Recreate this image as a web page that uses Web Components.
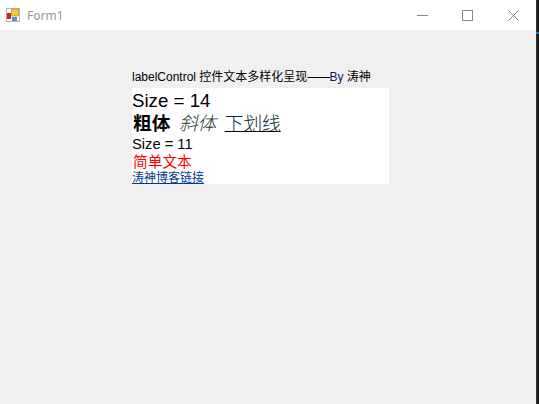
<!DOCTYPE html>
<html>
<head>
<meta charset="utf-8">
<title>Form1</title>
<style>
html, body { margin: 0; height: 100%; background: #f0f0f0; overflow: hidden; }
</style>
</head>
<body>
<win-form caption="Form1">
    <rich-label>
        <span slot="title">labelControl 控件文本多样化呈现<span style="letter-spacing:-1.5px">——</span><span style="color:#10106a;margin-left:1px">By</span> 涛神</span>
        <div style="font-size:18.7px;line-height:23px">Size = 14</div>
        <div style="font-size:18.7px;line-height:24px;white-space:nowrap;display:flex;padding-left:1px;gap:8.5px">
            <b>粗体</b>
            <i style="font-weight:300;color:#1f3a2e">斜体</i>
            <u style="font-weight:300;color:#0c2c3c;text-decoration-color:#000">下划线</u>
        </div>
        <div style="font-size:14.7px;line-height:17px">Size = 11</div>
        <div style="font-size:14.7px;line-height:18px;color:#f00;padding-left:1px">简单文本</div>
        <div style="font-size:12px;line-height:14px"><a href="#" style="color:#003a8c">涛神博客链接</a></div>
    </rich-label>
</win-form>
<script>
class WinForm extends HTMLElement {
    constructor() {
        super();
        this.shadowDOM = this.attachShadow({mode:'open'});
    }

    connectedCallback() {
        this.shadowDOM.innerHTML = `
            <style>
                :host { display: flex; height: 100vh; background: #f0f0f0; font-family: "Liberation Sans", "Noto Sans CJK SC", sans-serif; }
                .form { flex: 1; display: flex; flex-direction: column; }
                header { display: flex; align-items: center; height: 30px; background: #fff; flex: none; }
                .icon { margin-left: 6px; width: 14px; height: 14px; flex: none; }
                .caption { margin-left: 7px; font: 12px "Noto Sans", sans-serif; color: #999; flex: 1; }
                .btn { height: 30px; display: flex; align-items: center; justify-content: center; flex: none; }
                main { flex: 1; padding: 38px 0 0 132px; }
                .edge { width: 3px; flex: none; background: #1a1a1a; border-left: 1px solid #333; box-sizing: border-box; position: relative; }
                .edge i { position: absolute; left: -1px; right: 0; top: 32px; height: 2px; background: #1a7fc8; }
            </style>
            <div class="form">
                <header>
                    <svg class="icon" viewBox="0 0 14 14">
                        <rect x=".5" y=".5" width="13" height="13" fill="#fff" stroke="#b5b5b5"/>
                        <rect x="5.5" y="1" width="7" height="7" fill="#f4c93a" stroke="#b98a10" stroke-width=".7"/>
                        <rect x="1" y="5" width="4" height="6" fill="#c22a20"/>
                        <rect x="6" y="9" width="5" height="4" fill="#5a8fe0"/>
                    </svg>
                    <span class="caption">${this.getAttribute('caption')}</span>
                    <div class="btn" style="width:44px"><svg width="11" height="11" viewBox="0 0 11 11"><path d="M0 5.5h11" stroke="#888" fill="none"/></svg></div>
                    <div class="btn" style="width:47px"><svg width="11" height="11" viewBox="0 0 11 11"><rect x=".5" y=".5" width="10" height="10" stroke="#888" fill="none"/></svg></div>
                    <div class="btn" style="width:45px"><svg width="11" height="11" viewBox="0 0 11 11"><path d="M.5 .5l10 10M10.5 .5l-10 10" stroke="#888" fill="none"/></svg></div>
                </header>
                <main><slot></slot></main>
            </div>
            <div class="edge"><i></i></div>
        `;
    }
}

class RichLabel extends HTMLElement {
    constructor() {
        super();
        this.shadowDOM = this.attachShadow({mode:'open'});
    }

    connectedCallback() {
        this.shadowDOM.innerHTML = `
            <style>
                :host { display: block; width: 257px; color: #000; }
                .title { font: 12px/18px "Liberation Sans", "Noto Sans CJK SC", sans-serif; height: 20px; white-space: nowrap; }
                .box { background: #fff; height: 96px; padding-top: 1px; box-sizing: border-box; overflow: hidden; }
            </style>
            <div class="title"><slot name="title"></slot></div>
            <div class="box"><slot></slot></div>
        `;
    }
}

customElements.define('win-form', WinForm);
customElements.define('rich-label', RichLabel);
</script>
</body>
</html>
